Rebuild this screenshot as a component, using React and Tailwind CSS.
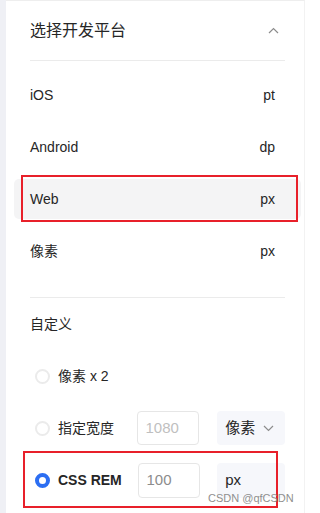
import React from "react";

const font = { fontFamily: '"Liberation Sans", "Noto Sans CJK SC", sans-serif' };

const platforms = [
  { name: "iOS", unit: "pt" },
  { name: "Android", unit: "dp" },
  { name: "Web", unit: "px", active: true },
  { name: "像素", unit: "px" },
];

function Radio({ checked }) {
  if (checked) {
    return (
      <span className="ml-[5px] w-[15px] h-[15px] rounded-full border-[4px] border-[#2c6ef2] bg-white shrink-0" />
    );
  }
  return (
    <span className="ml-[5px] w-[15px] h-[15px] rounded-full border-2 border-[#ebebeb] bg-white shrink-0" />
  );
}

function Chevron({ up, className }) {
  return (
    <svg width="11" height="7" viewBox="0 0 11 7" className={className}>
      <polyline
        points={up ? "1,6 5.5,1.5 10,6" : "1,1 5.5,5.5 10,1"}
        fill="none"
        stroke="#8c8c8c"
        strokeWidth="1.2"
      />
    </svg>
  );
}

export default function App() {
  return (
    <div
      className="relative w-[307px] h-[513px] overflow-hidden bg-white flex text-[#262626]"
      style={font}
    >
      <div className="w-[6px] bg-[#eff0f5] shrink-0" />
      <div className="w-[299px] border-t border-[#eeeeee] border-r border-r-[#f2f2f2] pl-[24px] pr-[19px]">
        <div className="h-[59px] flex items-center justify-between">
          <span className="text-[16px]">选择开发平台</span>
          <Chevron up className="mr-[6px]" />
        </div>
        <div className="h-px bg-[#ebebeb]" />

        <div className="mt-[14px] flex flex-col gap-3">
          {platforms.map((p) => (
            <div
              key={p.name}
              className={
                p.active
                  ? "-mx-4 pl-4 pr-[26px] h-10 flex items-center justify-between text-[14px] rounded-[5px] bg-[#f4f4f5]"
                  : "-mx-4 pl-4 pr-[26px] h-10 flex items-center justify-between text-[14px]"
              }
            >
              <span>{p.name}</span>
              <span>{p.unit}</span>
            </div>
          ))}
        </div>

        <div className="mt-[26px] h-px bg-[#ebebeb]" />

        <div className="mt-[9px] flex flex-col gap-[18px] text-[14px]">
          <div className="h-[34px] flex items-center">自定义</div>

          <div className="h-[34px] flex items-center">
            <Radio />
            <span className="ml-[8px]">像素 x 2</span>
          </div>

          <div className="h-[34px] flex items-center">
            <div className="w-[107px] flex items-center">
              <Radio />
              <span className="ml-[8px]">指定宽度</span>
            </div>
            <div className="w-[63px] h-[34px] rounded-[4px] border border-[#e6e6e6] flex items-center px-2 text-[#bfbfbf] text-[15px]">
              1080
            </div>
            <div className="ml-[18px] w-[68px] h-[34px] rounded-[4px] bg-[#f6f7fb] flex items-center pl-2 text-[15px]">
              <span>像素</span>
              <Chevron className="ml-[8px]" />
            </div>
          </div>

          <div className="h-[34px] flex items-center">
            <div className="w-[108px] flex items-center">
              <Radio checked />
              <span className="ml-[8px] font-bold">CSS REM</span>
            </div>
            <div className="w-[63px] h-[35px] rounded-[4px] border border-[#e6e6e6] flex items-center px-2 text-[#8c8c8c] text-[15px]">
              100
            </div>
            <div className="ml-[17px] w-[68px] h-[35px] rounded-[4px] bg-[#f6f7fb] flex items-center pl-2 text-[15px]">
              px
            </div>
          </div>
        </div>
      </div>

      <div className="absolute left-[21px] top-[175px] w-[277px] h-[47px] border-2 border-[#e8202a]" />
      <div className="absolute left-[23px] top-[451px] w-[255px] h-[57px] border-2 border-[#e8202a]" />
      <div className="absolute left-[208px] top-[491px] text-[11px] text-[#8f8f8f] leading-[14px]">
        CSDN @qfCSDN
      </div>
    </div>
  );
}
